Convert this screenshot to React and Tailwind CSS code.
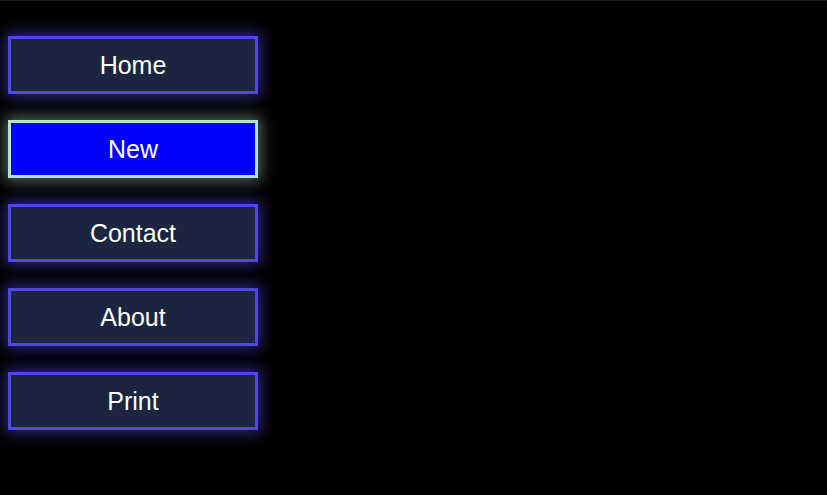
import React from "react";

const items = ["Home", "New", "Contact", "About", "Print"];

export default function App() {
  return (
    <div
      className="w-[827px] h-[495px] bg-black border-t border-[#1c1c22] overflow-hidden"
      style={{ fontFamily: '"Liberation Sans", Arial, sans-serif' }}
    >
      <div className="flex flex-col gap-[26px] pt-[35px] pl-[8px]">
        {items.map((t) => {
          const active = t === "New";
          return (
            <div
              key={t}
              className={
                "w-[250px] h-[58px] border-[3px] flex items-center justify-center pt-[1px] text-white text-[25px] leading-none " +
                (active
                  ? "bg-[#0000ff] border-[#b3e2da] shadow-[0_0_14px_3px_rgba(179,226,218,0.45)]"
                  : "bg-[#1b2540] border-[#4f46e5] shadow-[0_0_14px_3px_rgba(79,70,229,0.55)]")
              }
            >
              {t}
            </div>
          );
        })}
      </div>
    </div>
  );
}
